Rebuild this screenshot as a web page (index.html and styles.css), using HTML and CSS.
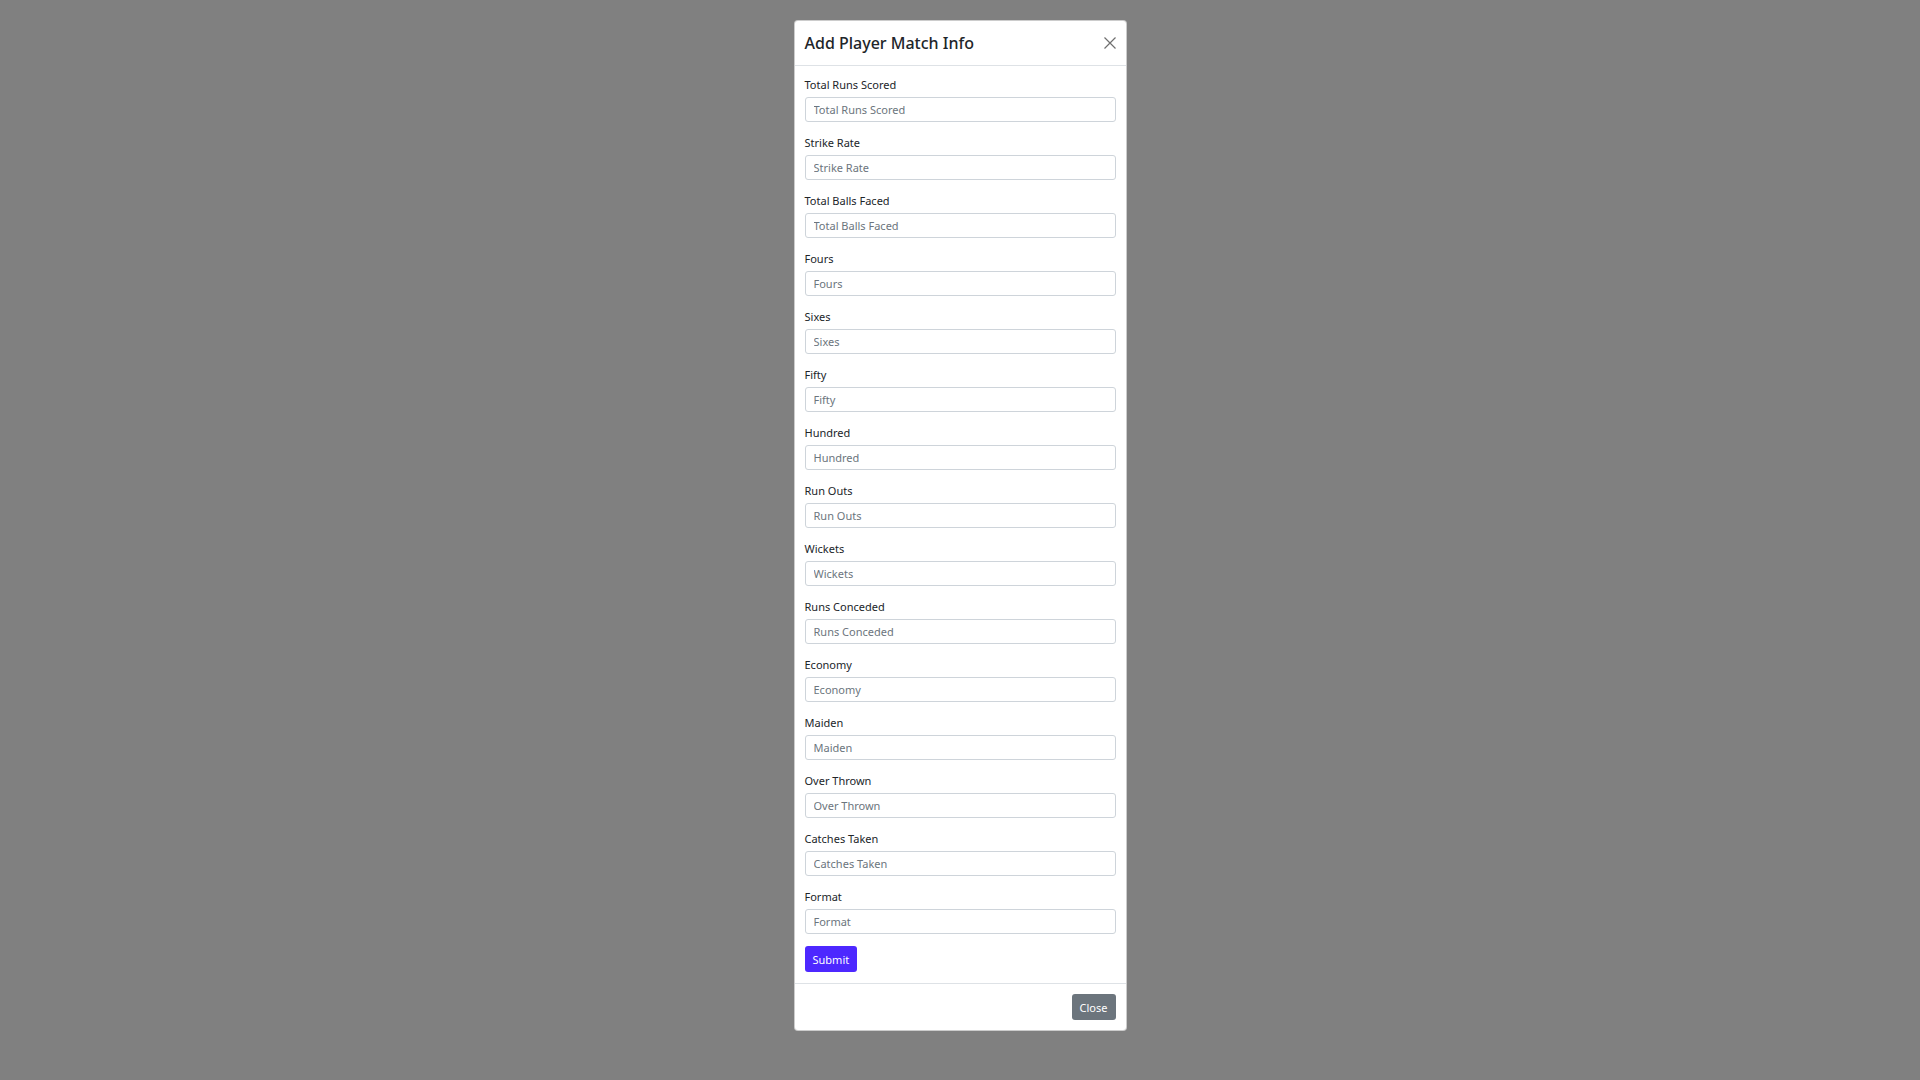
FILE: index.html
```html
<!DOCTYPE html>
<html lang="en">
  <head>
    <meta charset="UTF-8" />
    <title>Add Player Match Info</title>
    <link rel="stylesheet" href="styles.css">
  </head>
  <body>
    <div class="modal">
      <div class="modal-header">
        <h5>Add Player Match Info</h5>
        <button class="btn-close" aria-label="Close">
          <svg width="12" height="12" viewBox="0 0 12 12">
            <path d="M0.5 0.5 L11.5 11.5 M11.5 0.5 L0.5 11.5" stroke="#6f6f6f" stroke-width="1.2" fill="none" />
          </svg>
        </button>
      </div>

      <form class="modal-body">
        <div class="field">
          <label>Total Runs Scored</label>
          <input type="text" placeholder="Total Runs Scored" />
        </div>
        <div class="field">
          <label>Strike Rate</label>
          <input type="text" placeholder="Strike Rate" />
        </div>
        <div class="field">
          <label>Total Balls Faced</label>
          <input type="text" placeholder="Total Balls Faced" />
        </div>
        <div class="field">
          <label>Fours</label>
          <input type="text" placeholder="Fours" />
        </div>
        <div class="field">
          <label>Sixes</label>
          <input type="text" placeholder="Sixes" />
        </div>
        <div class="field">
          <label>Fifty</label>
          <input type="text" placeholder="Fifty" />
        </div>
        <div class="field">
          <label>Hundred</label>
          <input type="text" placeholder="Hundred" />
        </div>
        <div class="field">
          <label>Run Outs</label>
          <input type="text" placeholder="Run Outs" />
        </div>
        <div class="field">
          <label>Wickets</label>
          <input type="text" placeholder="Wickets" />
        </div>
        <div class="field">
          <label>Runs Conceded</label>
          <input type="text" placeholder="Runs Conceded" />
        </div>
        <div class="field">
          <label>Economy</label>
          <input type="text" placeholder="Economy" />
        </div>
        <div class="field">
          <label>Maiden</label>
          <input type="text" placeholder="Maiden" />
        </div>
        <div class="field">
          <label>Over Thrown</label>
          <input type="text" placeholder="Over Thrown" />
        </div>
        <div class="field">
          <label>Catches Taken</label>
          <input type="text" placeholder="Catches Taken" />
        </div>
        <div class="field">
          <label>Format</label>
          <input type="text" placeholder="Format" />
        </div>
        <button type="submit" class="btn btn-submit">Submit</button>
      </form>

      <div class="modal-footer">
        <button class="btn btn-secondary">Close</button>
      </div>
    </div>
  </body>
</html>
```

FILE: styles.css
```css
* {
  box-sizing: border-box;
}

body {
  margin: 0;
  background-color: #808080;
  font-family: "Noto Sans", "Open Sans", sans-serif;
  color: #212529;
}

.modal {
  width: 333px;
  margin: 20px auto 0;
  background-color: #fff;
  border: 1px solid rgba(0, 0, 0, 0.2);
  border-radius: 4px;
}

.modal-header {
  height: 45px;
  padding: 0 10px;
  display: flex;
  justify-content: space-between;
  align-items: center;
  border-bottom: 1px solid #dee2e6;
}

.modal-header h5 {
  margin: 0;
  font-size: 16px;
  font-weight: 500;
}

.btn-close {
  background: none;
  border: none;
  padding: 0;
  width: 12px;
  height: 12px;
  cursor: pointer;
  display: flex;
}

.modal-body {
  padding: 10px 10px 11px;
}

.field label {
  display: block;
  font-size: 11px;
  line-height: 18px;
  margin-bottom: 3px;
}

.field input {
  display: block;
  width: 100%;
  height: 25px;
  padding: 0 8px;
  margin-bottom: 12px;
  font-family: inherit;
  font-size: 11px;
  color: #212529;
  border: 1px solid #ced4da;
  border-radius: 3px;
}

.field input::placeholder {
  color: #6c757d;
}

.btn {
  height: 26px;
  padding: 0 8px;
  font-family: inherit;
  font-size: 11px;
  color: #fff;
  border: none;
  border-radius: 3px;
  cursor: pointer;
}

.btn-submit {
  background-color: #4d28ff;
}

.btn-secondary {
  background-color: #6c757d;
}

.modal-footer {
  padding: 10px;
  display: flex;
  justify-content: flex-end;
  border-top: 1px solid #dee2e6;
}
```
